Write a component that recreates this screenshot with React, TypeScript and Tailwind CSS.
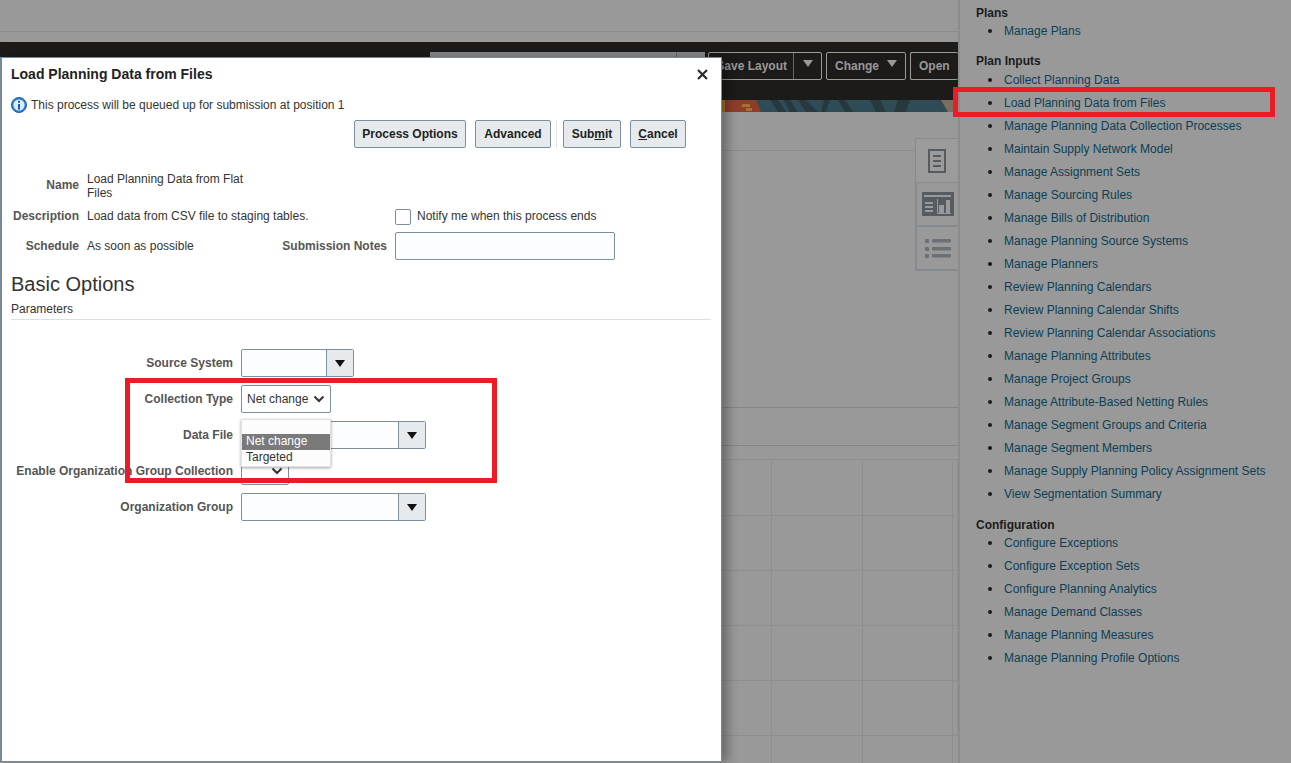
const inputs = ["Collect Planning Data","Load Planning Data from Files","Manage Planning Data Collection Processes","Maintain Supply Network Model","Manage Assignment Sets","Manage Sourcing Rules","Manage Bills of Distribution","Manage Planning Source Systems","Manage Planners","Review Planning Calendars","Review Planning Calendar Shifts","Review Planning Calendar Associations","Manage Planning Attributes","Manage Project Groups","Manage Attribute-Based Netting Rules","Manage Segment Groups and Criteria","Manage Segment Members","Manage Supply Planning Policy Assignment Sets","View Segmentation Summary"];
const config = ["Configure Exceptions","Configure Exception Sets","Configure Planning Analytics","Manage Demand Classes","Manage Planning Measures","Manage Planning Profile Options"];

function LinkRow({ text }: { text: string }) {
  return (
    <li className="h-[23px] flex items-center">
      <span className="w-[4px] h-[4px] rounded-full bg-[#1a1a1a] ml-[12px] mr-[12px]" />
      <span className="text-[#0a3f55] text-[12px]">{text}</span>
    </li>
  );
}

function Caret({ color = "#111" }: { color?: string }) {
  return (
    <svg width="10" height="7" viewBox="0 0 10 7"><path d="M0 0h10L5 7z" fill={color} /></svg>
  );
}

function Chevron() {
  return (
    <svg width="12" height="8" viewBox="0 0 12 8" fill="none"><path d="M1.5 1.5 6 6l4.5-4.5" stroke="#333" strokeWidth="2" /></svg>
  );
}

function Combo({ width, label }: { width: string; label: string }) {
  return (
    <div className="flex items-center gap-2 h-[28px]">
      <label className="w-[231px] text-right font-bold text-[12px] text-[#555555] whitespace-nowrap">{label}</label>
      <div className={`flex h-[28px] ${width} border border-[#7b8fa0] rounded-[2px] bg-[#fcfdfe]`}>
        <div className="flex-1" />
        <div className="w-[27px] border-l border-[#7b8fa0] bg-[#e6eaed] flex items-center justify-center"><Caret /></div>
      </div>
    </div>
  );
}

function Btn({ children, className = "" }: { children: React.ReactNode; className?: string }) {
  return (
    <button className={`h-[28px] border border-[#7b8fa0] rounded-[2px] bg-[#e6eaed] text-[12px] font-bold text-[#222] ${className}`}>{children}</button>
  );
}

function DarkBtn({ children, className = "" }: { children: React.ReactNode; className?: string }) {
  return (
    <div className={`h-[28px] border border-[#9a9a9a] rounded-[2px] flex items-center text-[12px] font-bold text-[#999] whitespace-nowrap ${className}`}>{children}</div>
  );
}

export default function App() {
  return (
    <div className="relative w-[1291px] h-[763px] overflow-hidden bg-[#999999] font-['Liberation_Sans',Arial,sans-serif] flex">
      {/* page behind the scrim */}
      <main className="w-[958px] h-[763px] flex flex-col shrink-0 overflow-hidden">
        <div className="h-[32px] shrink-0 border-b border-[#8a8d8f]" />
        <div className="h-[10px] shrink-0" />
        <div className="h-[58px] shrink-0 bg-[#1c1b19] flex justify-end items-start pt-[10px] overflow-hidden">
          <div className="w-[275px] h-[28px] bg-[#8a8a8a] flex justify-end"><div className="w-[29px] border-l border-[#6a6a6a]" /></div>
          <DarkBtn className="w-[114px] ml-[3px] justify-end">
            <span className="pr-[6px]">Save Layout</span>
            <span className="w-[28px] h-full border-l border-[#666] flex items-center justify-center"><span className="mb-[5px] flex"><Caret color="#999" /></span></span>
          </DarkBtn>
          <DarkBtn className="w-[80px] ml-[4px] pl-[8px] gap-[8px]">Change <span className="mb-[5px] flex"><Caret color="#999" /></span></DarkBtn>
          <DarkBtn className="w-[48px] ml-[4px] pl-[8px] border-r-0">Open</DarkBtn>
        </div>
        <div className="h-[12px] shrink-0 flex justify-end">
          <svg width="238" height="12" viewBox="0 0 238 12">
            <rect width="238" height="12" fill="#2f4b55" />
            <path d="M0 0h36l5 12H0z" fill="#8f3d2a" />
            <path d="M0 0h5v12H0zM22 4h8v3h-8zM26 8h6v3h-6z" fill="#a0762f" />
            <path d="M50 0h8l8 12h-8zM64 0h6l8 12h-8zM78 0h8l12 12H86zM104 0h6l-4 12h-5zM118 0h7l8 12h-8zM150 0h10l6 12h-10zM178 0h12l-4 12h-12z" fill="#26393f" />
            <path d="M221 0h12v12h-5z" fill="#7a6f5e" />
          </svg>
        </div>
        <div className="h-[38px] shrink-0" />
        <div className="h-[1px] shrink-0 bg-[#8a8d8f]" />
        <div className="h-[256px] shrink-0" />
        <div className="h-[1px] shrink-0 bg-[#858585]" />
        <div className="h-[37px] shrink-0" />
        <div className="h-[1px] shrink-0 bg-[#858585]" />
        <div className="h-[13px] shrink-0" />
        <div className="flex-1 min-h-0 border-t border-[#8e8e8e] pt-[1px] grid grid-cols-[772px_91px_90px_5px] auto-rows-[55px]">
          {Array.from({ length: 24 }).map((_, i) => (
            <div key={i} className="h-[55px] border-b border-r border-[#8e8e8e] last:border-r-0" />
          ))}
        </div>
      </main>

      <aside className="flex-1 border-l-2 border-[#8c8c8c] pl-[16px]">
        <h3 className="text-[12px] font-bold text-[#1c1c1c] leading-[14px] mt-[6px]">Plans</h3>
        <ul className="-mt-[1px]"><LinkRow text="Manage Plans" /></ul>
        <h3 className="text-[12px] font-bold text-[#1c1c1c] leading-[14px] mt-[12px]">Plan Inputs</h3>
        <ul>{inputs.map((t) => <LinkRow key={t} text={t} />)}</ul>
        <h3 className="text-[12px] font-bold text-[#1c1c1c] leading-[14px] mt-[13px]">Configuration</h3>
        <ul className="-mt-[1px]">{config.map((t) => <LinkRow key={t} text={t} />)}</ul>
      </aside>

      {/* side tabs */}
      <div className="absolute left-[915px] top-[138px] w-[43px] flex flex-col">
        <div className="h-[45px] bg-[#9b9b9b] border border-r-0 border-[#868b8f] flex items-center justify-center">
          <svg width="18" height="24" viewBox="0 0 18 24" fill="none"><rect x="1" y="1" width="16" height="22" stroke="#555b60" strokeWidth="2" /><path d="M5 7h8M5 12h8M5 17h8" stroke="#555b60" strokeWidth="2" /></svg>
        </div>
        <div className="h-[44px] border-2 border-r-0 border-t-0 border-[#868b8f] flex items-center justify-center">
          <svg width="32" height="24" viewBox="0 0 32 24"><rect width="32" height="24" rx="1" fill="#555b60" /><rect x="2" y="3" width="27" height="2" fill="#9a9a9a" /><path d="M3 10h8v2H3zM3 14h8v2H3zM3 18h8v2H3z" fill="#9a9a9a" /><path d="M15 7h1v14h13v1H15z" fill="#9a9a9a" /><path d="M17 13h5v8h-5zM24 8h4v13h-4z" fill="#9a9a9a" /></svg>
        </div>
        <div className="h-[44px] border-2 border-r-0 border-t-0 border-[#868b8f] flex items-center justify-center">
          <svg width="26" height="20" viewBox="0 0 26 20" fill="#6a7075"><rect x="0" y="1" width="4" height="4" rx="1" /><rect x="7" y="1" width="19" height="3.5" rx="1" /><rect x="0" y="9" width="4" height="4" rx="1" /><rect x="7" y="9" width="19" height="3.5" rx="1" /><rect x="0" y="16" width="4" height="4" rx="1" /><rect x="7" y="16" width="19" height="3.5" rx="1" /></svg>
        </div>
      </div>

      {/* red highlight on list */}
      <div className="absolute left-[953px] top-[87px] w-[322px] h-[30px] border-[5px] border-[#ed1c24]" />

      {/* dialog */}
      <section className="absolute left-0 top-[57px] w-[722px] h-[705px] bg-white border border-l-[2px] border-[#77899a] shadow-[6px_0_10px_rgba(0,0,0,0.3)] text-[#333]">
        <div className="flex items-center justify-between pl-[9px] pr-[13px] pt-[2px] h-[30px]">
          <h2 className="text-[14px] font-bold text-[#222]">Load Planning Data from Files</h2>
          <svg width="11" height="11" viewBox="0 0 11 11" fill="none"><path d="M1 1l9 9M10 1l-9 9" stroke="#2a2a2a" strokeWidth="2.2" /></svg>
        </div>
        <div className="flex items-center gap-[4px] pl-[9px] mt-[8px] h-[18px] text-[12px] text-[#333]">
          <svg width="16" height="16" viewBox="0 0 16 16"><circle cx="8" cy="8" r="7.5" fill="#2f7fd1" stroke="#1b5ea8" /><circle cx="8" cy="8" r="5.6" fill="#dcecfb" /><rect x="7" y="7" width="2" height="5.5" fill="#1b5ea8" /><rect x="7" y="3.8" width="2" height="2" fill="#1b5ea8" /></svg>
          <span>This process will be queued up for submission at position 1</span>
        </div>
        <div className="flex items-center justify-end pr-[35px] mt-[6px]">
          <Btn className="w-[112px]">Process Options</Btn>
          <Btn className="w-[76px] ml-[9px]">Advanced</Btn>
          <div className="w-px h-[28px] bg-[#dfe3e6] ml-[5px] mr-[6px]" />
          <Btn className="w-[58px]">Sub<span className="underline">m</span>it</Btn>
          <Btn className="w-[56px] ml-[9px]"><span className="underline">C</span>ancel</Btn>
        </div>

        <div className="mt-[24px] text-[12px]">
          <div className="flex h-[27px]">
            <span className="w-[77px] text-right font-bold text-[#555555] self-center -mt-[2px]">Name</span>
            <span className="ml-[8px] w-[170px] leading-[14px] text-[#333]">Load Planning Data from Flat Files</span>
          </div>
          <div className="flex items-start leading-[14px] h-[16px] mt-[10px]">
            <span className="w-[77px] text-right font-bold text-[#555555]">Description</span>
            <span className="ml-[8px] w-[308px] text-[#333]">Load data from CSV file to staging tables.</span>
            <span className="w-[16px] h-[16px] border border-[#7b8fa0] rounded-[2px] bg-white" />
            <span className="ml-[6px] text-[#333]">Notify me when this process ends</span>
          </div>
          <div className="flex items-center h-[28px] mt-[7px]">
            <span className="w-[77px] text-right font-bold text-[#555555]">Schedule</span>
            <span className="ml-[8px] w-[192px] text-[#333]">As soon as possible</span>
            <span className="w-[108px] text-right font-bold text-[#555555]">Submission Notes</span>
            <span className="ml-[8px] w-[220px] h-[28px] border border-[#7b8fa0] rounded-[2px] bg-[#fcfdfe]" />
          </div>
        </div>

        <h2 className="text-[20px] leading-[24px] text-[#333] pl-[9px] mt-[12px]">Basic Options</h2>
        <div className="ml-[9px] mr-[10px] mt-[5px] h-[19px] border-b border-[#d9e0e6] text-[12px] leading-[16px] text-[#333]">Parameters</div>

        <div className="flex flex-col gap-[8px] mt-[29px] text-[12px]">
          <Combo width="w-[113px]" label="Source System" />
          <div className="flex items-center gap-2 h-[28px]">
            <label className="w-[231px] text-right font-bold text-[#555555]">Collection Type</label>
            <div className="w-[90px] h-[28px] border border-[#7b8fa0] rounded-[2px] bg-white flex items-center justify-between pl-[5px] pr-[5px] text-[#333]">Net change <Chevron /></div>
          </div>
          <Combo width="w-[185px]" label="Data File" />
          <div className="flex items-center gap-2 h-[28px]">
            <label className="w-[231px] text-right font-bold text-[#555555] whitespace-nowrap">Enable Organization Group Collection</label>
            <div className="w-[48px] h-[28px] border border-[#7b8fa0] rounded-[2px] bg-white flex items-center justify-end pr-[5px]"><Chevron /></div>
          </div>
          <Combo width="w-[185px]" label="Organization Group" />
        </div>

        {/* open select list */}
        <div className="absolute left-[239px] top-[361px] w-[90px] h-[48px] bg-[#fcfcfd] border border-[#e2e2e2] shadow-[0_1px_3px_rgba(0,0,0,0.35)] text-[12px] z-10 pt-[14px]">
          <div className="h-[16px] leading-[15px] bg-[#7a7a7a] text-white pl-[4px]">Net change</div>
          <div className="h-[15px] leading-[15px] text-[#333] pl-[4px]">Targeted</div>
        </div>
        {/* red highlight on form */}
        <div className="absolute left-[123px] top-[320px] w-[372px] h-[105px] border-[5px] border-[#ed1c24] z-20" />
      </section>
    </div>
  );
}
